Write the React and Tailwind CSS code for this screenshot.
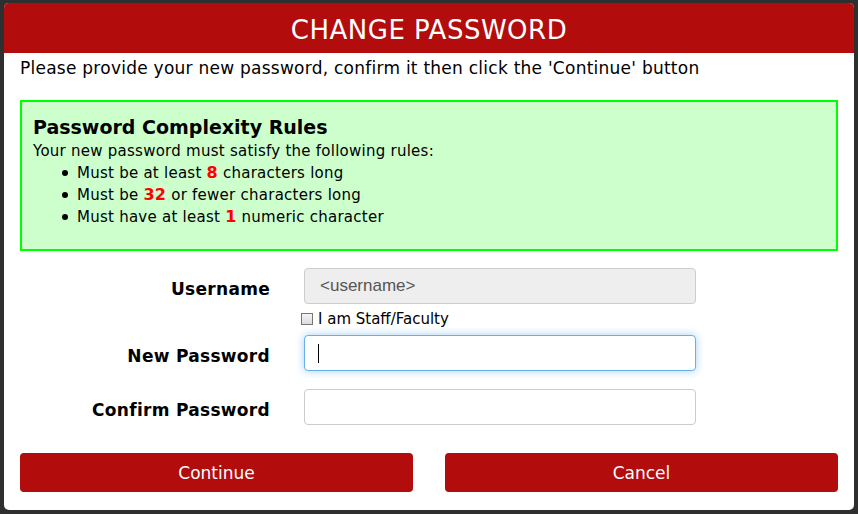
export default function App() {
  const rules = [
    ["Must be at least ", "8", " characters long"],
    ["Must be ", "32", " or fewer characters long"],
    ["Must have at least ", "1", " numeric character"],
  ];

  return (
    <div className="w-[858px] h-[514px] bg-[#2f2f2f] pt-[3px] px-[4px] overflow-hidden font-['DejaVu_Sans',sans-serif]">
      <div className="w-[850px] h-[507px] bg-white rounded-[5px] overflow-hidden flex flex-col">
        <div className="h-[50px] bg-[#b20c0c] flex items-center justify-center text-white text-[26px] tracking-[0.5px] leading-none pt-[4px]">
          CHANGE PASSWORD
        </div>

        <p className="pl-[16px] mt-[3px] text-[17px] tracking-[0.25px] leading-[24px] text-black">
          Please provide your new password, confirm it then click the 'Continue' button
        </p>

        <div className="mx-[16px] mt-[20px] h-[151px] border-2 border-[#00ff00] bg-[#ccffcc] pl-[11px] pt-[12px] text-black">
          <h3 className="text-[19px] font-bold leading-[26px]">Password Complexity Rules</h3>
          <p className="text-[15px] tracking-[0.25px] leading-[22px]">Your new password must satisfy the following rules:</p>
          <ul className="pl-[29px] text-[15px] tracking-[0.25px] leading-[22px]">
            {rules.map(([a, n, b]) => (
              <li key={n} className="flex items-center">
                <span className="w-[6px] h-[6px] rounded-full bg-black mr-[9px]" />
                <span>
                  {a}
                  <b className="text-[#ff0000] text-[16px]">{n}</b>
                  {b}
                </span>
              </li>
            ))}
          </ul>
        </div>

        <div className="mt-[17px] grid grid-cols-[266px_392px] gap-x-[34px] items-center">
          <label className="pt-[8px] text-right text-[17px] font-bold tracking-[0.3px]">Username</label>
          <div className="h-[36px] rounded-[4px] border border-[#cccccc] bg-[#eeeeee] flex items-center pl-[15px] text-[17px] text-[#555555] font-['Liberation_Sans',sans-serif]">
            &lt;username&gt;
          </div>

          <div />
          <div className="h-[18px] mt-[6px] ml-[-3px] flex items-center gap-[5px] text-[15px]">
            <span className="w-[12px] h-[12px] border border-[#767676] bg-gradient-to-b from-[#f4f4f4] to-[#dcdcdc]" />
            <span>I am Staff/Faculty</span>
          </div>

          <label className="mt-[7px] pt-[8px] text-right text-[17px] font-bold tracking-[0.3px]">New Password</label>
          <div className="mt-[7px] h-[36px] rounded-[4px] border border-[#66afe9] bg-white shadow-[0_0_8px_rgba(102,175,233,0.6)] flex items-center pl-[13px]">
            <span className="w-px h-[19px] bg-black" />
          </div>

          <label className="mt-[18px] pt-[8px] text-right text-[17px] font-bold tracking-[0.3px]">Confirm Password</label>
          <div className="mt-[18px] h-[36px] rounded-[4px] border border-[#cccccc] bg-white" />
        </div>

        <div className="mt-[28px] px-[16px] flex justify-between">
          <button className="w-[393px] h-[39px] pt-[3px] rounded-[4px] bg-[#b20c0c] text-white text-[17px]">Continue</button>
          <button className="w-[393px] h-[39px] pt-[3px] rounded-[4px] bg-[#b20c0c] text-white text-[17px]">Cancel</button>
        </div>
      </div>
    </div>
  );
}
